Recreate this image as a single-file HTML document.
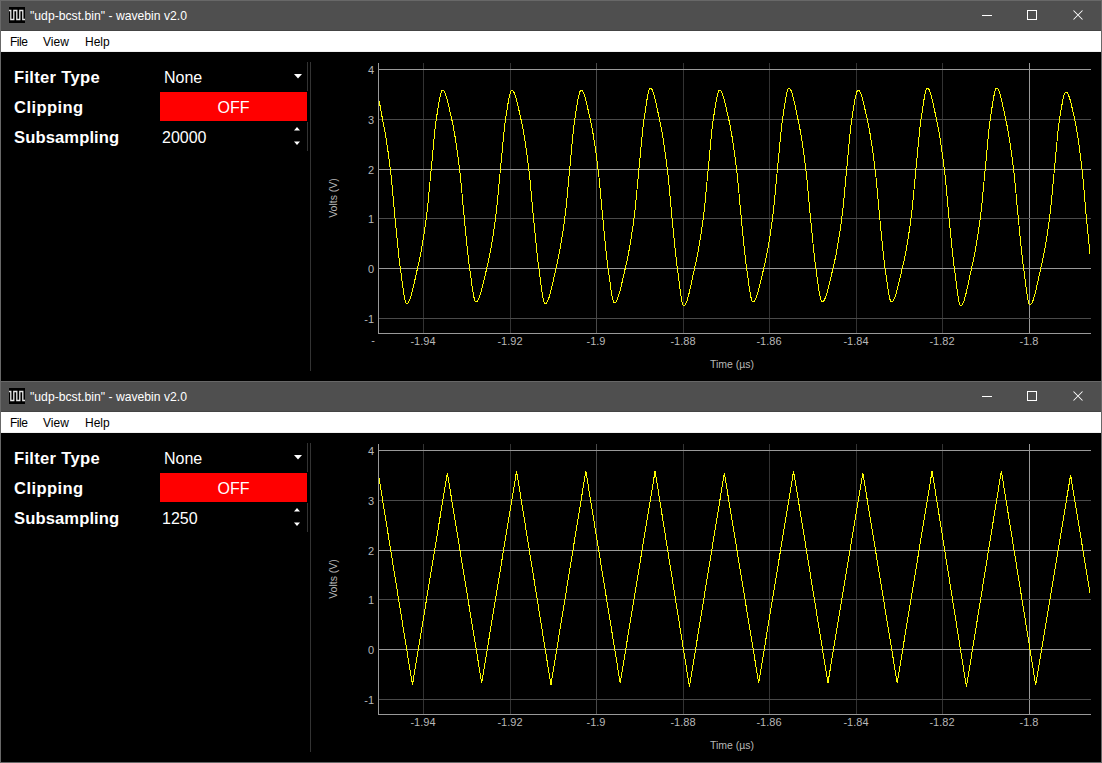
<!DOCTYPE html><html><head><meta charset="utf-8"><style>

*{margin:0;padding:0;box-sizing:border-box}
html,body{width:1102px;height:763px;overflow:hidden;background:#000;font-family:"Liberation Sans",sans-serif}
.win{position:absolute;left:0;width:1102px;overflow:hidden}
.win>*{position:absolute}
.bt{left:0;top:0;width:1102px;height:1px;background:#686868}
.bb{left:0;bottom:0;width:1102px;height:1px;background:#686868}
.bl{left:0;top:0;width:1px;height:100%;background:#686868}
.br{right:0;top:0;width:1px;height:100%;background:#686868}
.title{left:1px;top:1px;width:1100px;height:30px;background:#4f4f4f;border-bottom:1px solid #444}
.icon{left:9px;top:7px}
.ttext{left:30px;top:8px;font-size:12.2px;line-height:16px;color:#fff;white-space:nowrap}
.wmin{left:982px;top:15px;width:10px;height:1px;background:#fff}
.wmax{left:1027px;top:10px;width:10px;height:10px;border:1px solid #fff}
.wclose{left:1073px;top:10px}
.menu{left:1px;top:31px;width:1100px;height:21px;background:#fff;border-bottom:1px solid #f0f0f0}
.menu span{position:absolute;top:4px;font-size:12px;line-height:14px;color:#000}
.content{left:1px;top:52px;width:1100px;height:329px;background:#000}
.lbl{left:14px;font-size:16.6px;line-height:20px;font-weight:bold;color:#fff;white-space:nowrap}
.val{font-size:16px;line-height:20px;color:#fff;white-space:nowrap}
.red{left:160px;top:92px;width:147px;height:29px;background:#ff0000;color:#fff;font-size:16px;line-height:31px;text-align:center}
.sep{width:1px;background:#333}
.chart{left:0;top:0}
.yl{left:334px;width:40px;text-align:right;font-size:11px;line-height:14px;color:#b8b8b8}
.xl{top:334px;width:60px;text-align:center;font-size:11px;line-height:14px;color:#b8b8b8}
.xt{left:682px;top:357px;width:100px;text-align:center;font-size:10.5px;line-height:14px;color:#b8b8b8}
.yt{left:283px;top:191px;width:100px;height:14px;text-align:center;font-size:10.5px;line-height:14px;color:#b8b8b8;transform:rotate(-90deg)}

</style></head><body>
<div class="win" style="top:0px;height:381px">
<div class="bt"></div><div class="bl"></div><div class="br"></div>
<div class="title"></div>
<svg class="icon" width="16" height="16" viewBox="0 0 16 16"><rect width="16" height="16" fill="#000"/><path d="M0 3.5H1.8V12.5H4.8V3.5H7.8V12.5H10.8V3.5H13.8V12.5H16" fill="none" stroke="#e8e8e8" stroke-width="1.3"/></svg>
<div class="ttext">"udp-bcst.bin" - wavebin v2.0</div>
<div class="wmin"></div><div class="wmax"></div>
<svg class="wclose" width="10" height="10" viewBox="0 0 10 10"><path d="M0.5 0.5L9.5 9.5M9.5 0.5L0.5 9.5" stroke="#fff" stroke-width="1.05"/></svg>
<div class="menu"><span style="left:9px;letter-spacing:-0.5px">File</span><span style="left:42px">View</span><span style="left:84px">Help</span></div>
<div class="content"></div>
<div class="lbl" style="top:68px;letter-spacing:0.3px">Filter Type</div>
<div class="lbl" style="top:98px;letter-spacing:0.4px">Clipping</div>
<div class="lbl" style="top:128px;letter-spacing:0.1px">Subsampling</div>
<div class="val" style="top:68px;left:164px">None</div>
<svg class="arr" style="left:294px;top:74px" width="8" height="5" viewBox="0 0 8 5"><path d="M0 0H8L4 4.5Z" fill="#fff"/></svg>
<div class="red"><span>OFF</span></div>
<div class="val" style="top:128px;left:162px">20000</div>
<svg class="arr" style="left:294px;top:127px" width="6" height="4" viewBox="0 0 6 4"><path d="M0 3.5H6L3 0Z" fill="#fff"/></svg>
<svg class="arr" style="left:294px;top:141px" width="6" height="4" viewBox="0 0 6 4"><path d="M0 0.5H6L3 4Z" fill="#fff"/></svg>
<div class="sep" style="left:307px;top:62px;height:29px"></div>
<div class="sep" style="left:307px;top:122px;height:29px"></div>
<div class="sep" style="left:310px;top:62px;height:309px"></div>
<svg class="chart" width="1102" height="381" viewBox="0 0 1102 381">
<rect x="423" y="63" width="1" height="270" fill="#333333"/>
<rect x="510" y="63" width="1" height="270" fill="#333333"/>
<rect x="596" y="63" width="1" height="270" fill="#4a4a4a"/>
<rect x="683" y="63" width="1" height="270" fill="#333333"/>
<rect x="769" y="63" width="1" height="270" fill="#333333"/>
<rect x="856" y="63" width="1" height="270" fill="#333333"/>
<rect x="942" y="63" width="1" height="270" fill="#333333"/>
<rect x="1029" y="63" width="1" height="270" fill="#999999"/>
<rect x="379" y="69" width="712" height="1" fill="#999999"/>
<rect x="379" y="119" width="712" height="1" fill="#4a4a4a"/>
<rect x="379" y="169" width="712" height="1" fill="#999999"/>
<rect x="379" y="218" width="712" height="1" fill="#4a4a4a"/>
<rect x="379" y="268" width="712" height="1" fill="#999999"/>
<rect x="379" y="318" width="712" height="1" fill="#4a4a4a"/>
<rect x="378" y="63" width="1" height="271" fill="#999999"/>
<rect x="378" y="333" width="713" height="1" fill="#999999"/>
<polyline points="379.00,101.20 380.00,105.50 381.00,111.00 382.00,116.50 383.00,121.64 384.00,126.57 385.00,132.04 386.00,138.03 387.00,144.50 388.00,151.43 389.00,158.78 390.00,166.52 391.00,175.04 392.00,185.17 393.00,196.21 394.00,207.38 395.00,217.90 396.00,228.00 397.00,238.22 398.00,248.17 399.00,257.46 400.00,265.72 401.00,273.09 402.00,280.79 403.00,288.28 404.00,294.96 405.00,300.19 406.00,303.35 407.00,303.94 408.00,303.12 409.00,301.43 410.00,298.99 411.00,295.91 412.00,292.30 413.00,288.30 414.00,284.01 415.00,279.56 416.00,275.06 417.00,270.62 418.00,266.33 419.00,261.83 420.00,257.00 421.00,251.84 422.00,246.32 423.00,240.42 424.00,234.13 425.00,227.43 426.00,220.30 427.00,212.37 428.00,202.88 429.00,192.41 430.00,181.60 431.00,171.10 432.00,160.84 433.00,149.95 434.00,139.18 435.00,129.29 436.00,121.08 437.00,114.59 438.00,108.18 439.00,102.15 440.00,96.91 441.00,92.89 442.00,90.49 443.00,90.07 444.00,91.01 445.00,92.93 446.00,95.67 447.00,99.07 448.00,102.97 449.00,107.22 450.00,111.66 451.00,116.12 452.00,120.50 453.00,125.28 454.00,130.62 455.00,136.49 456.00,142.84 457.00,149.66 458.00,156.90 459.00,164.55 460.00,172.75 461.00,182.52 462.00,193.41 463.00,204.62 464.00,215.38 465.00,225.47 466.00,235.77 467.00,245.90 468.00,255.42 469.00,263.88 470.00,271.09 471.00,278.38 472.00,285.57 473.00,292.10 474.00,297.39 475.00,300.87 476.00,302.00 477.00,301.45 478.00,300.07 479.00,297.96 480.00,295.22 481.00,291.95 482.00,288.28 483.00,284.30 484.00,280.11 485.00,275.84 486.00,271.57 487.00,267.43 488.00,263.11 489.00,258.42 490.00,253.35 491.00,247.90 492.00,242.06 493.00,235.82 494.00,229.18 495.00,222.13 496.00,214.51 497.00,205.37 498.00,195.09 499.00,184.30 500.00,173.66 501.00,163.49 502.00,152.70 503.00,141.82 504.00,131.64 505.00,122.94 506.00,116.19 507.00,109.77 508.00,103.60 509.00,98.13 510.00,93.76 511.00,90.91 512.00,90.00 513.00,90.67 514.00,92.36 515.00,94.91 516.00,98.16 517.00,101.96 518.00,106.13 519.00,110.54 520.00,115.01 521.00,119.39 522.00,124.03 523.00,129.24 524.00,134.97 525.00,141.21 526.00,147.91 527.00,155.05 528.00,162.60 529.00,170.57 530.00,179.94 531.00,190.62 532.00,201.83 533.00,212.77 534.00,222.91 535.00,233.12 536.00,243.25 537.00,252.92 538.00,261.74 539.00,269.37 540.00,276.93 541.00,284.60 542.00,291.76 543.00,297.80 544.00,302.07 545.00,303.96 546.00,303.65 547.00,302.38 548.00,300.30 549.00,297.52 550.00,294.16 551.00,290.35 552.00,286.19 553.00,281.80 554.00,277.31 555.00,272.82 556.00,268.47 557.00,264.12 558.00,259.46 559.00,254.47 560.00,249.13 561.00,243.42 562.00,237.33 563.00,230.83 564.00,223.92 565.00,216.54 566.00,207.79 567.00,197.73 568.00,187.00 569.00,176.27 570.00,166.08 571.00,155.43 572.00,144.50 573.00,134.08 574.00,124.93 575.00,117.79 576.00,111.36 577.00,105.10 578.00,99.41 579.00,94.72 580.00,91.46 581.00,90.03 582.00,90.41 583.00,91.85 584.00,94.20 585.00,97.29 586.00,100.97 587.00,105.06 588.00,109.42 589.00,113.89 590.00,118.31 591.00,122.82 592.00,127.89 593.00,133.49 594.00,139.60 595.00,146.19 596.00,153.23 597.00,160.68 598.00,168.52 599.00,177.44 600.00,187.87 601.00,199.02 602.00,210.10 603.00,220.39 604.00,230.59 605.00,240.81 606.00,250.66 607.00,259.72 608.00,267.58 609.00,274.86 610.00,282.37 611.00,289.51 612.00,295.68 613.00,300.30 614.00,302.75 615.00,302.83 616.00,301.82 617.00,299.99 618.00,297.47 619.00,294.35 620.00,290.75 621.00,286.79 622.00,282.57 623.00,278.21 624.00,273.82 625.00,269.51 626.00,265.27 627.00,260.73 628.00,255.84 629.00,250.58 630.00,244.95 631.00,238.94 632.00,232.52 633.00,225.70 634.00,218.45 635.00,210.13 636.00,200.33 637.00,189.71 638.00,178.92 639.00,168.60 640.00,158.20 641.00,147.36 642.00,136.80 643.00,127.24 644.00,119.40 645.00,112.66 646.00,105.91 647.00,99.62 648.00,94.26 649.00,90.30 650.00,88.21 651.00,88.22 652.00,89.52 653.00,91.84 654.00,95.00 655.00,98.81 656.00,103.12 657.00,107.72 658.00,112.45 659.00,117.14 660.00,121.74 661.00,126.76 662.00,132.26 663.00,138.23 664.00,144.65 665.00,151.52 666.00,158.81 667.00,166.53 668.00,175.04 669.00,185.17 670.00,196.21 671.00,207.38 672.00,217.90 673.00,227.96 674.00,238.11 675.00,248.00 676.00,257.29 677.00,265.65 678.00,273.29 679.00,281.35 680.00,289.27 681.00,296.36 682.00,301.93 683.00,305.31 684.00,305.94 685.00,305.06 686.00,303.25 687.00,300.64 688.00,297.36 689.00,293.53 690.00,289.29 691.00,284.75 692.00,280.06 693.00,275.34 694.00,270.72 695.00,266.28 696.00,261.69 697.00,256.83 698.00,251.66 699.00,246.17 700.00,240.31 701.00,234.07 702.00,227.40 703.00,220.30 704.00,212.37 705.00,202.88 706.00,192.41 707.00,181.60 708.00,171.10 709.00,160.84 710.00,149.95 711.00,139.18 712.00,129.29 713.00,121.08 714.00,114.59 715.00,108.18 716.00,102.15 717.00,96.91 718.00,92.89 719.00,90.49 720.00,90.07 721.00,91.01 722.00,92.93 723.00,95.67 724.00,99.07 725.00,102.97 726.00,107.22 727.00,111.66 728.00,116.12 729.00,120.50 730.00,125.28 731.00,130.62 732.00,136.49 733.00,142.84 734.00,149.66 735.00,156.90 736.00,164.55 737.00,172.75 738.00,182.52 739.00,193.41 740.00,204.62 741.00,215.38 742.00,225.47 743.00,235.77 744.00,245.90 745.00,255.42 746.00,263.88 747.00,271.09 748.00,278.38 749.00,285.57 750.00,292.10 751.00,297.39 752.00,300.87 753.00,302.00 754.00,301.45 755.00,300.07 756.00,297.96 757.00,295.22 758.00,291.95 759.00,288.28 760.00,284.30 761.00,280.11 762.00,275.84 763.00,271.57 764.00,267.43 765.00,263.11 766.00,258.42 767.00,253.35 768.00,247.90 769.00,242.06 770.00,235.82 771.00,229.18 772.00,222.13 773.00,214.51 774.00,205.37 775.00,195.09 776.00,184.30 777.00,173.66 778.00,163.50 779.00,152.79 780.00,142.00 781.00,131.85 782.00,123.06 783.00,116.06 784.00,109.26 785.00,102.68 786.00,96.80 787.00,92.08 788.00,88.99 789.00,88.01 790.00,88.73 791.00,90.57 792.00,93.33 793.00,96.83 794.00,100.92 795.00,105.39 796.00,110.08 797.00,114.81 798.00,119.41 799.00,124.19 800.00,129.45 801.00,135.19 802.00,141.39 803.00,148.03 804.00,155.11 805.00,162.62 806.00,170.57 807.00,179.94 808.00,190.62 809.00,201.83 810.00,212.77 811.00,222.92 812.00,233.19 813.00,243.41 814.00,253.12 815.00,261.89 816.00,269.32 817.00,276.55 818.00,283.82 819.00,290.56 820.00,296.21 821.00,300.20 822.00,301.96 823.00,301.67 824.00,300.49 825.00,298.55 826.00,295.95 827.00,292.81 828.00,289.23 829.00,285.31 830.00,281.17 831.00,276.91 832.00,272.63 833.00,268.45 834.00,264.22 835.00,259.63 836.00,254.66 837.00,249.30 838.00,243.56 839.00,237.42 840.00,230.88 841.00,223.93 842.00,216.54 843.00,207.79 844.00,197.73 845.00,187.00 846.00,176.27 847.00,166.08 848.00,155.43 849.00,144.50 850.00,134.08 851.00,124.93 852.00,117.79 853.00,111.36 854.00,105.10 855.00,99.41 856.00,94.72 857.00,91.46 858.00,90.03 859.00,90.41 860.00,91.85 861.00,94.20 862.00,97.29 863.00,100.97 864.00,105.06 865.00,109.42 866.00,113.89 867.00,118.31 868.00,122.82 869.00,127.89 870.00,133.49 871.00,139.60 872.00,146.19 873.00,153.23 874.00,160.68 875.00,168.52 876.00,177.44 877.00,187.87 878.00,199.02 879.00,210.10 880.00,220.40 881.00,230.61 882.00,240.88 883.00,250.76 884.00,259.81 885.00,267.58 886.00,274.71 887.00,282.03 888.00,288.96 889.00,294.93 890.00,299.39 891.00,301.76 892.00,301.84 893.00,300.86 894.00,299.10 895.00,296.66 896.00,293.64 897.00,290.16 898.00,286.32 899.00,282.22 900.00,277.98 901.00,273.70 902.00,269.48 903.00,265.31 904.00,260.81 905.00,255.94 906.00,250.68 907.00,245.03 908.00,238.99 909.00,232.55 910.00,225.70 911.00,218.45 912.00,210.13 913.00,200.33 914.00,189.71 915.00,178.92 916.00,168.60 917.00,158.20 918.00,147.36 919.00,136.80 920.00,127.24 921.00,119.40 922.00,112.66 923.00,105.91 924.00,99.62 925.00,94.26 926.00,90.30 927.00,88.21 928.00,88.22 929.00,89.52 930.00,91.84 931.00,95.00 932.00,98.81 933.00,103.12 934.00,107.72 935.00,112.45 936.00,117.14 937.00,121.74 938.00,126.76 939.00,132.26 940.00,138.23 941.00,144.65 942.00,151.52 943.00,158.81 944.00,166.53 945.00,175.04 946.00,185.17 947.00,196.21 948.00,207.38 949.00,217.90 950.00,227.96 951.00,238.11 952.00,248.00 953.00,257.29 954.00,265.65 955.00,273.29 956.00,281.35 957.00,289.27 958.00,296.36 959.00,301.93 960.00,305.31 961.00,305.94 962.00,305.06 963.00,303.25 964.00,300.64 965.00,297.36 966.00,293.53 967.00,289.29 968.00,284.75 969.00,280.06 970.00,275.34 971.00,270.72 972.00,266.28 973.00,261.69 974.00,256.83 975.00,251.66 976.00,246.17 977.00,240.31 978.00,234.07 979.00,227.40 980.00,220.30 981.00,212.37 982.00,202.88 983.00,192.41 984.00,181.60 985.00,171.10 986.00,160.87 987.00,150.07 988.00,139.38 989.00,129.50 990.00,121.16 991.00,114.36 992.00,107.58 993.00,101.13 994.00,95.49 995.00,91.13 996.00,88.53 997.00,88.07 998.00,89.09 999.00,91.18 1000.00,94.14 1001.00,97.81 1002.00,102.00 1003.00,106.55 1004.00,111.27 1005.00,115.98 1006.00,120.56 1007.00,125.46 1008.00,130.84 1009.00,136.70 1010.00,143.01 1011.00,149.76 1012.00,156.95 1013.00,164.56 1014.00,172.75 1015.00,182.52 1016.00,193.41 1017.00,204.62 1018.00,215.38 1019.00,225.44 1020.00,235.63 1021.00,245.65 1022.00,255.13 1023.00,263.72 1024.00,271.27 1025.00,279.09 1026.00,286.90 1027.00,294.05 1028.00,299.89 1029.00,303.75 1030.00,305.00 1031.00,304.39 1032.00,302.86 1033.00,300.51 1034.00,297.48 1035.00,293.89 1036.00,289.86 1037.00,285.51 1038.00,280.96 1039.00,276.35 1040.00,271.79 1041.00,267.40 1042.00,262.92 1043.00,258.15 1044.00,253.07 1045.00,247.65 1046.00,241.87 1047.00,235.70 1048.00,229.13 1049.00,222.12 1050.00,214.51 1051.00,205.37 1052.00,195.09 1053.00,184.30 1054.00,173.66 1055.00,163.47 1056.00,152.60 1057.00,141.63 1058.00,131.42 1059.00,122.80 1060.00,116.34 1061.00,110.28 1062.00,104.54 1063.00,99.47 1064.00,95.44 1065.00,92.83 1066.00,92.00 1067.00,92.62 1068.00,94.16 1069.00,96.50 1070.00,99.50 1071.00,103.27 1072.00,107.45 1073.00,111.87 1074.00,116.37 1075.00,120.84 1076.00,125.92 1077.00,131.70 1078.00,138.13 1079.00,145.15 1080.00,152.69 1081.00,160.70 1082.00,169.12 1083.00,178.87 1084.00,190.21 1085.00,202.18 1086.00,213.82 1087.00,223.93 1088.00,234.18 1089.00,244.33 1090.00,253.95" fill="none" stroke="#ffff00" stroke-width="1" shape-rendering="crispEdges"/>
</svg>
<div class="yl" style="top:63px">4</div>
<div class="yl" style="top:113px">3</div>
<div class="yl" style="top:163px">2</div>
<div class="yl" style="top:212px">1</div>
<div class="yl" style="top:262px">0</div>
<div class="yl" style="top:312px">-1</div>
<div class="xl" style="left:393px">-1.94</div>
<div class="xl" style="left:480px">-1.92</div>
<div class="xl" style="left:566px">-1.9</div>
<div class="xl" style="left:653px">-1.88</div>
<div class="xl" style="left:739px">-1.86</div>
<div class="xl" style="left:826px">-1.84</div>
<div class="xl" style="left:912px">-1.82</div>
<div class="xl" style="left:999px">-1.8</div>
<div class="xl" style="left:343px;top:333px">-</div>
<div class="xt">Time (µs)</div>
<div class="yt">Volts (V)</div>
</div>
<div class="win" style="top:381px;height:382px">
<div class="bt"></div><div class="bl"></div><div class="br"></div>
<div class="bb"></div>
<div class="title"></div>
<svg class="icon" width="16" height="16" viewBox="0 0 16 16"><rect width="16" height="16" fill="#000"/><path d="M0 3.5H1.8V12.5H4.8V3.5H7.8V12.5H10.8V3.5H13.8V12.5H16" fill="none" stroke="#e8e8e8" stroke-width="1.3"/></svg>
<div class="ttext">"udp-bcst.bin" - wavebin v2.0</div>
<div class="wmin"></div><div class="wmax"></div>
<svg class="wclose" width="10" height="10" viewBox="0 0 10 10"><path d="M0.5 0.5L9.5 9.5M9.5 0.5L0.5 9.5" stroke="#fff" stroke-width="1.05"/></svg>
<div class="menu"><span style="left:9px;letter-spacing:-0.5px">File</span><span style="left:42px">View</span><span style="left:84px">Help</span></div>
<div class="content"></div>
<div class="lbl" style="top:68px;letter-spacing:0.3px">Filter Type</div>
<div class="lbl" style="top:98px;letter-spacing:0.4px">Clipping</div>
<div class="lbl" style="top:128px;letter-spacing:0.1px">Subsampling</div>
<div class="val" style="top:68px;left:164px">None</div>
<svg class="arr" style="left:294px;top:74px" width="8" height="5" viewBox="0 0 8 5"><path d="M0 0H8L4 4.5Z" fill="#fff"/></svg>
<div class="red"><span>OFF</span></div>
<div class="val" style="top:128px;left:162px">1250</div>
<svg class="arr" style="left:294px;top:127px" width="6" height="4" viewBox="0 0 6 4"><path d="M0 3.5H6L3 0Z" fill="#fff"/></svg>
<svg class="arr" style="left:294px;top:141px" width="6" height="4" viewBox="0 0 6 4"><path d="M0 0.5H6L3 4Z" fill="#fff"/></svg>
<div class="sep" style="left:307px;top:62px;height:29px"></div>
<div class="sep" style="left:307px;top:122px;height:29px"></div>
<div class="sep" style="left:310px;top:62px;height:309px"></div>
<svg class="chart" width="1102" height="381" viewBox="0 0 1102 381">
<rect x="423" y="63" width="1" height="270" fill="#333333"/>
<rect x="510" y="63" width="1" height="270" fill="#333333"/>
<rect x="596" y="63" width="1" height="270" fill="#4a4a4a"/>
<rect x="683" y="63" width="1" height="270" fill="#333333"/>
<rect x="769" y="63" width="1" height="270" fill="#333333"/>
<rect x="856" y="63" width="1" height="270" fill="#333333"/>
<rect x="942" y="63" width="1" height="270" fill="#333333"/>
<rect x="1029" y="63" width="1" height="270" fill="#999999"/>
<rect x="379" y="69" width="712" height="1" fill="#999999"/>
<rect x="379" y="119" width="712" height="1" fill="#4a4a4a"/>
<rect x="379" y="169" width="712" height="1" fill="#999999"/>
<rect x="379" y="218" width="712" height="1" fill="#4a4a4a"/>
<rect x="379" y="268" width="712" height="1" fill="#999999"/>
<rect x="379" y="318" width="712" height="1" fill="#4a4a4a"/>
<rect x="378" y="63" width="1" height="271" fill="#999999"/>
<rect x="378" y="333" width="713" height="1" fill="#999999"/>
<polyline points="379.00,96.64 412.44,304.00 447.34,92.00 481.69,302.00 516.59,90.00 550.94,304.00 585.84,90.00 620.19,302.00 655.09,90.00 689.44,306.00 724.34,92.00 758.69,302.00 793.59,90.00 827.94,302.00 862.84,92.00 897.19,302.00 932.09,90.00 966.44,306.00 1001.34,90.00 1035.69,304.00 1070.59,94.00 1090.00,212.10" fill="none" stroke="#ffff00" stroke-width="1" shape-rendering="crispEdges"/>
</svg>
<div class="yl" style="top:63px">4</div>
<div class="yl" style="top:113px">3</div>
<div class="yl" style="top:163px">2</div>
<div class="yl" style="top:212px">1</div>
<div class="yl" style="top:262px">0</div>
<div class="yl" style="top:312px">-1</div>
<div class="xl" style="left:393px">-1.94</div>
<div class="xl" style="left:480px">-1.92</div>
<div class="xl" style="left:566px">-1.9</div>
<div class="xl" style="left:653px">-1.88</div>
<div class="xl" style="left:739px">-1.86</div>
<div class="xl" style="left:826px">-1.84</div>
<div class="xl" style="left:912px">-1.82</div>
<div class="xl" style="left:999px">-1.8</div>
<div class="xt">Time (µs)</div>
<div class="yt">Volts (V)</div>
</div>
</body></html>
